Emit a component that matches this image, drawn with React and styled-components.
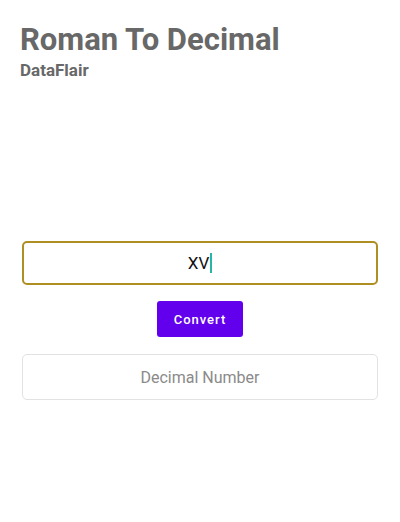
import React from 'react';
import styled, { createGlobalStyle } from 'styled-components';

const GlobalStyle = createGlobalStyle`
	html, body {
		margin: 0;
		padding: 0;
		background: #ffffff;
	}
	body {
		font-family: Roboto, 'Noto Sans', sans-serif;
	}
`;

const Screen = styled.div`
	width: 400px;
	height: 522px;
	box-sizing: border-box;
	padding: 22px 22px 0 22px;
	display: flex;
	flex-direction: column;
`;

const Title = styled.h1`
	margin: 0 0 0 -2px;
	font-size: 31px;
	line-height: 36px;
	font-weight: 700;
	color: #686868;
`;

const Subtitle = styled.h2`
	margin: 2px 0 0 -2px;
	font-size: 17px;
	line-height: 20px;
	font-weight: 700;
	color: #686868;
`;

const Form = styled.div`
	margin-top: 161px;
	display: flex;
	flex-direction: column;
	align-items: center;
`;

const Field = styled.div`
	width: 100%;
	box-sizing: border-box;
	height: ${(p) => (p.$focused ? 44 : 46)}px;
	border: ${(p) => (p.$focused ? '2px solid #b08f22' : '1px solid #e2e2e2')};
	border-radius: 5px;
	display: flex;
	align-items: center;
	justify-content: center;
	font-size: ${(p) => (p.$focused ? 17 : 16)}px;
	color: ${(p) => (p.$focused ? '#111111' : '#8a8a8a')};
`;

const Caret = styled.span`
	display: inline-block;
	width: 2px;
	height: 20px;
	margin-left: 1px;
	background: #26b5a6;
	vertical-align: middle;
`;

const ConvertButton = styled.button`
	margin: 16px 0 17px;
	width: 86px;
	height: 36px;
	border: none;
	border-radius: 3px;
	background: #6200ee;
	color: #ffffff;
	font-family: Roboto, 'Noto Sans', sans-serif;
	font-size: 13px;
	font-weight: 500;
	letter-spacing: 1px;
	padding: 0;
`;

export default function App() {
	return <>
		<GlobalStyle />
		<Screen>
			<Title>Roman To Decimal</Title>
			<Subtitle>DataFlair</Subtitle>
			<Form>
				<Field $focused>XV<Caret /></Field>
				<ConvertButton>Convert</ConvertButton>
				<Field>Decimal Number</Field>
			</Form>
		</Screen>
	</>;
}
